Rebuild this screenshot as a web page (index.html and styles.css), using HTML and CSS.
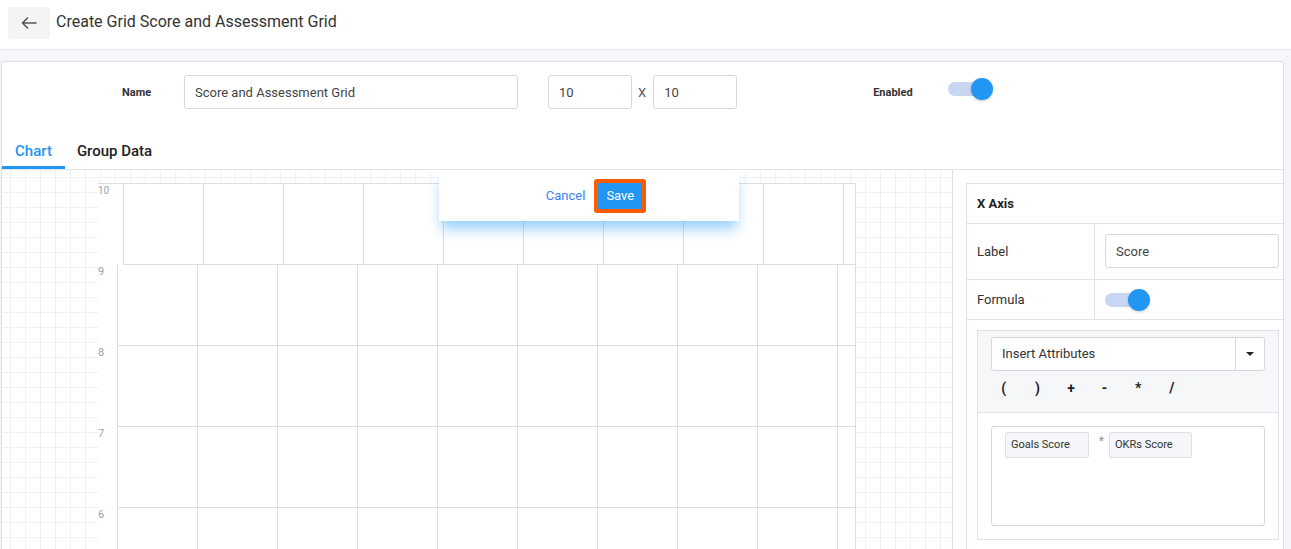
FILE: index.html
```html
<!DOCTYPE html>
<html lang="en">
<head>
  <meta charset="UTF-8" />
  <meta name="viewport" content="width=device-width, initial-scale=1.0"/>
  <title>Create Grid Score and Assessment Grid</title>
  <link rel="stylesheet" href="styles.css">
</head>
<body>
  <header class="topbar">
    <button class="back-btn" aria-label="Back">
      <svg width="16" height="16" viewBox="0 0 16 16" fill="none" stroke="#555" stroke-width="1.6" stroke-linecap="round" stroke-linejoin="round">
        <path d="M15 8H1.5M6.5 3L1.5 8l5 5"/>
      </svg>
    </button>
    <h1 class="page-title">Create Grid Score and Assessment Grid</h1>
  </header>

  <main class="page">
    <section class="card">
      <div class="form-row">
        <label class="field-label name-label">Name</label>
        <input class="text-input name-input" type="text" value="Score and Assessment Grid">
        <input class="text-input size-input" type="text" value="10">
        <span class="times">X</span>
        <input class="text-input size-input" type="text" value="10">
        <label class="field-label enabled-label">Enabled</label>
        <span class="toggle top-toggle"><span class="toggle-track"></span><span class="toggle-thumb"></span></span>
      </div>

      <nav class="tabs">
        <a class="tab active">Chart</a>
        <a class="tab">Group Data</a>
      </nav>

      <div class="workspace">
        <div class="canvas">
          <div class="chart">
            <div class="chart-row first"><span class="axis-label">10</span><div class="cells"></div></div>
            <div class="chart-row"><span class="axis-label">9</span><div class="cells"></div></div>
            <div class="chart-row"><span class="axis-label">8</span><div class="cells"></div></div>
            <div class="chart-row"><span class="axis-label">7</span><div class="cells"></div></div>
            <div class="chart-row"><span class="axis-label">6</span><div class="cells"></div></div>
          </div>

          <!-- floating save bar -->
          <div class="save-popup">
            <a class="cancel-link">Cancel</a>
            <button class="save-btn">Save</button>
          </div>
        </div>

        <aside class="side-panel">
          <div class="axis-box">
            <div class="axis-title">X Axis</div>
            <div class="prop-row">
              <div class="prop-name">Label</div>
              <div class="prop-value"><input class="text-input label-input" type="text" value="Score"></div>
            </div>
            <div class="prop-row formula-row">
              <div class="prop-name">Formula</div>
              <div class="prop-value">
                <span class="toggle"><span class="toggle-track"></span><span class="toggle-thumb"></span></span>
              </div>
            </div>
            <div class="formula-wrap">
              <div class="formula-box">
                <div class="formula-head">
                  <div class="attr-select">
                    <span class="attr-text">Insert Attributes</span>
                    <span class="attr-caret">
                      <svg width="10" height="6" viewBox="0 0 10 6"><path d="M1 1h8L5 5z" fill="#222"/></svg>
                    </span>
                  </div>
                  <div class="operators">
                    <button class="op">(</button>
                    <button class="op">)</button>
                    <button class="op">+</button>
                    <button class="op">-</button>
                    <button class="op">*</button>
                    <button class="op">/</button>
                  </div>
                </div>
                <div class="formula-body">
                  <div class="formula-input">
                    <span class="chip">Goals Score</span>
                    <span class="op-sign">*</span>
                    <span class="chip">OKRs Score</span>
                  </div>
                </div>
              </div>
            </div>
          </div>
        </aside>
      </div>
    </section>
  </main>
</body>
</html>
```

FILE: styles.css
```css
html, body {
    overflow: hidden;
}

body {
    margin: 0;
    background: #f5f6fa;
    font-family: Roboto, 'Liberation Sans', sans-serif;
    color: #333;
}

/* Top bar */
.topbar {
    height: 50px;
    display: flex;
    align-items: flex-start;
    padding: 7px 0 0 8px;
    box-sizing: border-box;
    background: #fff;
    border-bottom: 1px solid #e8e9ed;
}

.back-btn {
    width: 42px;
    height: 32px;
    padding: 0;
    border: 0;
    border-radius: 3px;
    background: #f3f4f6;
    display: flex;
    align-items: center;
    justify-content: center;
}

.page-title {
    margin: 0 0 0 6px;
    font-size: 16px;
    font-weight: 400;
    line-height: 30px;
    color: #333;
}

.page {
    padding: 11px 7px 0 1px;
}

.card {
    background: #fff;
    border: 1px solid #dcdde1;
    border-radius: 3px;
}

/* Name / size / enabled row */
.form-row {
    display: flex;
    align-items: center;
    padding: 13px 0 0 120px;
}

.field-label {
    font-size: 11px;
    font-weight: 700;
    color: #333;
}

.name-label {
    width: 62px;
}

.text-input {
    height: 34px;
    box-sizing: border-box;
    padding: 0 10px;
    border: 1px solid #d5d8de;
    border-radius: 3px;
    font-family: Roboto, 'Liberation Sans', sans-serif;
    font-size: 13px;
    color: #444;
    background: #fff;
}

.name-input {
    width: 334px;
    margin-right: 30px;
}

.size-input {
    width: 84px;
}

.times {
    margin: 0 7px 0 6px;
    font-size: 13px;
    color: #555;
}

.enabled-label {
    margin-left: 136px;
}

.top-toggle {
    margin: 0 0 6px 35px;
}

/* Toggle switch */
.toggle {
    position: relative;
    display: inline-block;
    width: 45px;
    height: 22px;
    flex: none;
}

.toggle-track {
    position: absolute;
    left: 0;
    top: 4px;
    width: 40px;
    height: 14px;
    border-radius: 7px;
    background: #c8d6f4;
}

.toggle-thumb {
    position: absolute;
    right: 0;
    top: 0;
    width: 22px;
    height: 22px;
    border-radius: 50%;
    background: #2196f3;
    box-shadow: 0 1px 3px rgba(0, 0, 0, 0.2);
}

/* Tabs */
.tabs {
    display: flex;
    margin-top: 25px;
    border-bottom: 1px solid #e3e4e8;
}

.tab {
    padding: 7px 13px 5px;
    line-height: 20px;
    font-size: 15px;
    font-weight: 500;
    color: #222;
    border-bottom: 3px solid transparent;
    cursor: pointer;
}

.tab + .tab {
    padding-left: 12px;
}

.tab.active {
    color: #2196f3;
    border-bottom-color: #2196f3;
}

/* Chart canvas */
.workspace {
    display: flex;
}

.canvas {
    flex: 1;
    position: relative;
    padding-bottom: 20px;
    background-color: #fff;
    background-image:
        linear-gradient(to right, #eef0f4 1px, transparent 1px),
        linear-gradient(to bottom, #eef0f4 1px, transparent 1px);
    background-size: 15px 15px;
    background-position: 8px 7px;
}

.chart {
    width: 758px;
    margin: 13px 0 0 96px;
    box-sizing: border-box;
    border-top: 1px solid #dcdde2;
    border-right: 1px solid #dcdde2;
    background: #fff;
    overflow: hidden;
}

.chart-row {
    display: flex;
    height: 81px;
}

.axis-label {
    flex: none;
    width: 19px;
    padding-top: 1px;
    font-size: 11px;
    line-height: 12px;
    color: #9aa1b1;
}

.chart-row.first .axis-label {
    width: 25px;
    font-size: 10px;
    padding-top: 1px;
}

.cells {
    flex: 1;
    border-left: 1px solid #dcdde2;
    border-bottom: 1px solid #dcdde2;
    background-image: linear-gradient(to right, transparent 79px, #dcdde2 79px);
    background-size: 80px 100%;
}

.save-popup {
    position: absolute;
    left: 437px;
    top: 0;
    width: 300px;
    height: 51px;
    box-sizing: border-box;
    padding-left: 14px;
    display: flex;
    align-items: center;
    justify-content: center;
    gap: 9px;
    background: #fff;
    box-shadow: 0 10px 12px -2px rgba(33, 150, 243, 0.45);
}

.cancel-link {
    font-size: 13px;
    color: #3b7ff5;
    cursor: pointer;
}

.save-btn {
    height: 34px;
    box-sizing: border-box;
    padding: 0 8px;
    border: 4px solid #ff5b00;
    border-radius: 3px;
    background: #2196f3;
    color: #fff;
    font-family: Roboto, 'Liberation Sans', sans-serif;
    font-size: 13px;
}

/* Right side panel */
.side-panel {
    flex: none;
    width: 331px;
    box-sizing: border-box;
    padding: 13px 0 0 13px;
    border-left: 1px solid #dcdde2;
    overflow: hidden;
}

.axis-box {
    width: 324px;
    box-sizing: border-box;
    border: 1px solid #dfe1e6;
}

.axis-title {
    height: 40px;
    box-sizing: border-box;
    padding: 0 10px;
    line-height: 39px;
    font-size: 13px;
    font-weight: 700;
    color: #222;
    border-bottom: 1px solid #dfe1e6;
}

.prop-row {
    display: flex;
    border-bottom: 1px solid #dfe1e6;
}

.prop-name {
    width: 128px;
    box-sizing: border-box;
    padding-left: 10px;
    display: flex;
    align-items: center;
    font-size: 13px;
    color: #333;
    border-right: 1px solid #dfe1e6;
}

.prop-value {
    flex: 1;
    padding: 10px 10px 11px;
    display: flex;
    align-items: center;
}

.label-input {
    width: 100%;
}

.formula-row .prop-value {
    height: 39px;
    box-sizing: border-box;
    padding: 0 10px;
}

.formula-wrap {
    padding: 10px;
}

.formula-box {
    border: 1px solid #dfe1e6;
}

.formula-head {
    padding: 6px 13px 7px;
    background: #f6f7f9;
    border-bottom: 1px solid #dfe1e6;
}

.attr-select {
    display: flex;
    height: 34px;
    box-sizing: border-box;
    border: 1px solid #d5d8de;
    border-radius: 3px;
    background: #fff;
}

.attr-text {
    flex: 1;
    padding-left: 10px;
    line-height: 32px;
    font-size: 13px;
    color: #333;
}

.attr-caret {
    width: 28px;
    display: flex;
    align-items: center;
    justify-content: center;
    border-left: 1px solid #d5d8de;
}

.operators {
    display: flex;
    align-items: center;
    height: 34px;
    margin-left: -4px;
}

.op {
    width: 33.6px;
    padding: 0;
    border: 0;
    background: none;
    font-family: Roboto, 'Liberation Sans', sans-serif;
    font-size: 14px;
    font-weight: 700;
    color: #222;
}

.formula-body {
    padding: 13px;
}

.formula-input {
    height: 100px;
    box-sizing: border-box;
    padding: 5px 13px;
    display: flex;
    align-items: flex-start;
    border: 1px solid #d5d8de;
    border-radius: 3px;
}

.chip {
    height: 26px;
    box-sizing: border-box;
    padding: 0 18px 0 5px;
    line-height: 24px;
    font-size: 11px;
    color: #333;
    background: #f4f6f9;
    border: 1px solid #dde0e6;
    border-radius: 2px;
}

.op-sign {
    margin: 2px 5px 0 10px;
    font-size: 12px;
    line-height: 14px;
    color: #8d95a6;
}
```
